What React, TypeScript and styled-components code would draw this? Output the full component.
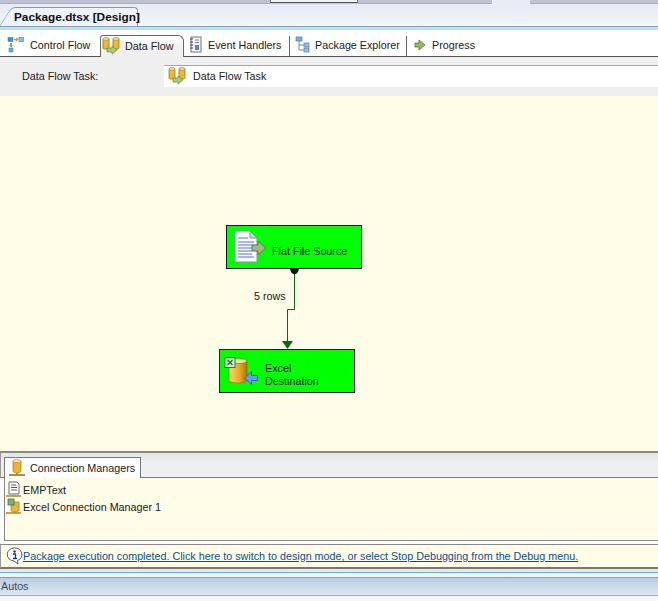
import React from "react";
import styled, { createGlobalStyle } from "styled-components";

const Global = createGlobalStyle`
  html, body { margin: 0; padding: 0; background: #fff; overflow: hidden; }
  body { font-family: "Liberation Sans", "Noto Sans", sans-serif; font-size: 10.75px; color: #1a1a1a; }
`;
const Page = styled.div`
  width: 658px; height: 601px; display: flex; flex-direction: column; overflow: hidden;
`;
const TopStrip = styled.div`
  height: 4px; flex: none; display: flex; background: #bfc5d1;
`;
const TopPiece = styled.div<{ $w: number; $kind: "gray" | "box" | "light" }>`
  width: ${(p) => p.$w}px; box-sizing: border-box;
  ${(p) => p.$kind === "gray" && "background: #bcc2cf; border-bottom: 1px solid #a9afbc;"}
  ${(p) => p.$kind === "box" && "background: #eef1f6; height: 3px; border-bottom: 1px solid #555; border-left: 1px solid #777; border-right: 1px solid #777;"}
  ${(p) => p.$kind === "light" && "background: #e8ecf5;"}
`;
const DocStrip = styled.div`
  height: 22px; flex: none; display: flex; align-items: flex-end; padding-left: 14px;
  background: linear-gradient(#e6eaf4, #f2f5fa); overflow: hidden;
`;
const DocTab = styled.div`
  position: relative; width: 124px; height: 19px; box-sizing: border-box; background: #eef2f9;
  border: 1px solid #7f9db9; border-left: none; border-bottom: none; border-radius: 0 4px 0 0;
  font-size: 11.8px; font-weight: 700; color: #111; padding: 2px 0 0 0; white-space: nowrap;
  &::before {
    content: ""; position: absolute; left: -9px; top: -1px; width: 14px; height: 19px; background: #eef2f9;
    border-top: 1px solid #7f9db9; border-left: 1px solid #7f9db9; border-radius: 5px 0 0 0;
    transform: skewX(-32deg); z-index: 0;
  }
`;
const DocTabText = styled.span`
  position: relative;
`;
const BlueRule = styled.div`
  height: 4px; flex: none; background: #c2ddf0; border-top: 1px solid #7fa4b8; box-sizing: border-box;
`;
const TabRow = styled.div`
  height: 26px; flex: none; display: flex; align-items: flex-end; background: #fff;
  border-bottom: 1px solid #555;
`;
const DesignerTab = styled.div<{ $w?: number; $pad: number; $gap: number; $sep?: boolean }>`
  width: ${(p) => (p.$w ? `${p.$w}px` : "auto")}; height: 20px; box-sizing: border-box;
  display: flex; align-items: center; gap: ${(p) => p.$gap}px; padding: 0 0 2px ${(p) => p.$pad}px;
  border-right: ${(p) => (p.$sep ? "1px solid #666" : "none")};
  white-space: nowrap;
`;
const ActiveTab = styled.div`
  width: 84px; height: 22px; box-sizing: border-box; margin-bottom: -1px; position: relative;
  display: flex; align-items: center; gap: 5px; padding: 0 0 2px 1px;
  background: linear-gradient(#fff, #f0f0f0 60%);
  border: 1px solid #666; border-bottom: none; border-radius: 3px 6px 0 0;
  white-space: nowrap;
`;
const TaskBar = styled.div`
  flex: none; height: 39px; background: #efefef; display: flex; align-items: center; padding: 0 0 2px 22px; box-sizing: border-box;
`;
const TaskLabel = styled.div`
  width: 142px;
`;
const TaskField = styled.div`
  flex: 1; height: 21px; background: #fff; border-top: 1px solid #a8a8a8; display: flex; align-items: center; gap: 7px; padding-left: 4px;
`;
const Canvas = styled.div`
  flex: none; height: 355px; background: #fffce8; position: relative;
`;
const Node = styled.div<{ $x: number; $y: number; $gap: number; $pad: number }>`
  position: absolute; left: ${(p) => p.$x}px; top: ${(p) => p.$y}px; width: 136px; height: 44px; box-sizing: border-box;
  background: #00ff00; border: 1px solid #111; display: flex; align-items: center;
  padding-left: ${(p) => p.$pad}px; gap: ${(p) => p.$gap}px; line-height: 13px;
`;
const NodeLabel = styled.span`
  margin-top: 8px;
`;
const RowsLabel = styled.div`
  position: absolute; left: 254px; top: 194px;
`;
const Wire = styled.svg`
  position: absolute; left: 275px; top: 173px;
`;
const TrayDivider = styled.div`
  flex: none; height: 2px; background: #8a8a84;
`;
const TrayTabs = styled.div`
  flex: none; height: 24px; background: linear-gradient(#e4e6ec, #eeeff0 40%); display: flex; align-items: flex-end; padding-left: 3px;
  border-bottom: 1px solid #777; border-left: 1px solid #999;
`;
const TrayTab = styled.div`
  width: 137px; height: 21px; margin-bottom: -1px; box-sizing: border-box; background: #fff; border: 1px solid #777; border-bottom: none;
  display: flex; align-items: center; gap: 4px; padding-left: 3px; white-space: nowrap;
`;
const TrayList = styled.div`
  flex: none; height: 63px; box-sizing: border-box; background: #fffce8; margin-left: 4px; border-left: 1px solid #888; padding: 3px 0 0 0;
  border-bottom: 1px solid #888;
`;
const TrayItem = styled.div`
  height: 17px; display: flex; align-items: center; white-space: nowrap;
`;
const InfoBar = styled.div`
  flex: none; height: 25px; box-sizing: border-box; margin-top: 3px; background: #fffce8; border-top: 1px solid #888; border-bottom: 2px solid #777;
  border-left: 1px solid #999; display: flex; align-items: center; padding-left: 5px; gap: 0;
`;
const InfoLink = styled.a`
  color: #0a4f9a; text-decoration: underline; white-space: nowrap;
`;
const BottomEdge = styled.div`
  flex: none; height: 8px; background: linear-gradient(#e2eaf2 0 3px, #6fa8cf 3px 4px, #eef4fa 4px);
`;
const AutosHeader = styled.div`
  flex: none; height: 19px; box-sizing: border-box; background: linear-gradient(#b9cde2, #dde7f1); border-top: 1px solid #999; border-bottom: 1px solid #aaa;
  color: #3c4a55; padding-left: 1px; line-height: 16px;
`;
const Rest = styled.div`flex: 1; background: #f7f7f3;`;

const ControlFlowIcon = () => (
  <svg width="18" height="18" viewBox="0 0 18 18">
    <rect x="2" y="1.500" width="5" height="4" fill="#3f8fd8" stroke="#3a6ea8" strokeWidth=".5"/>
    <rect x="13" y="1.500" width="5" height="4" fill="#7cc0ee" stroke="#3a6ea8" strokeWidth=".5"/>
    <rect x="3" y="12" width="4" height="4" fill="#6aaee8" stroke="#3a6ea8" strokeWidth=".5"/>
    <path d="M8 2.800h2V1.500l3 2-3 2V4.200H8z" fill="#f08a30"/>
    <path d="M4 7h2v2h1.200L5 11.500 2.800 9H4z" fill="#7ab45a"/>
  </svg>
);
const Cyl = ({ x, y, w = 6, h = 11 }: { x: number; y: number; w?: number; h?: number }) => (
  <g>
    <rect x={x} y={y} width={w} height={h} rx="1.5" fill="#efb92e" stroke="#8a6a10" strokeWidth=".7"/>
    <ellipse cx={x + w / 2} cy={y + 1} rx={w / 2} ry="1.2" fill="#fff2a8" stroke="#8a6a10" strokeWidth=".5"/>
  </g>
);
const DataFlowIcon = () => (
  <svg width="18" height="18" viewBox="0 0 18 18">
    <Cyl x={1} y={1} />
    <Cyl x={11} y={1} />
    <path d="M5 11h5V9l5 4-5 4v-2H5z" fill="#a8cc74" stroke="#5a7a3a" strokeWidth=".6"/>
  </svg>
);
const EventIcon = () => (
  <svg width="16" height="18" viewBox="0 0 16 18">
    <rect x="3" y="1" width="10" height="15" fill="#f2f3f6" stroke="#777"/>
    <path d="M2 3h3M2 6h3M2 9h3M2 12h3" stroke="#444"/>
    <path d="M7 4h4M7 6.500h4" stroke="#889" />
    <rect x="7" y="9" width="4" height="5" fill="#5a86b8"/>
  </svg>
);
const ExplorerIcon = () => (
  <svg width="16" height="18" viewBox="0 0 16 18">
    <path d="M4 5v9h6M4 9h6" stroke="#888" fill="none"/>
    <rect x="1" y="1" width="6" height="4" fill="#7cb0e4" stroke="#3a6ea8" strokeWidth=".6"/>
    <rect x="9" y="7" width="5" height="4" fill="#94c0ea" stroke="#3a6ea8" strokeWidth=".6"/>
    <rect x="9" y="12" width="5" height="4" fill="#94c0ea" stroke="#3a6ea8" strokeWidth=".6"/>
  </svg>
);
const ProgressIcon = () => (
  <svg width="12" height="12" viewBox="0 0 12 12">
    <path d="M1 4h4V1l6 5-6 5V8H1z" fill="#8cc060" stroke="#4d7a32" strokeWidth=".8"/>
  </svg>
);
const FlatFileIcon = () => (
  <svg width="34" height="34" viewBox="0 0 34 34">
    <path d="M2 1h15l7 7v24H2z" fill="#f6f8fc" stroke="#8a93ad"/>
    <path d="M17 1v7h7z" fill="#c8d2e6" stroke="#8a93ad"/>
    <path d="M5 8h10M5 12h16M5 15h16M5 18h16M5 21h14M5 24h14M5 27h16" stroke="#6076b0" strokeWidth="1.2"/>
    <path d="M19 15h6v-4l8 7-8 7v-4h-6z" fill="#9dbb7e" stroke="#5e7a58"/>
  </svg>
);
const ExcelDestIcon = () => (
  <svg width="34" height="29" viewBox="0 0 34 29">
    <defs>
      <linearGradient id="gold" x1="0" x2="1" y1="0" y2="0">
        <stop offset="0" stopColor="#f7d873"/><stop offset=".6" stopColor="#e4a91e"/><stop offset="1" stopColor="#a87408"/>
      </linearGradient>
    </defs>
    <path d="M5 4h18v19c0 2-4 3-9 3s-9-1-9-3z" fill="url(#gold)" stroke="#8a6a10" strokeWidth=".6"/>
    <ellipse cx="14" cy="4" rx="9" ry="2.500" fill="#f6e6a0" stroke="#8a6a10" strokeWidth=".6"/>
    <rect x="1" y="0.500" width="10" height="10" fill="#d6ead6" stroke="#2e7a3a"/>
    <path d="M3.500 3l5 5M8.500 3l-5 5" stroke="#1e6a2a" strokeWidth="1.300"/>
    <path d="M33.500 18.500v5h-6v4l-7-6.500 7-6.500v4z" fill="#5f9ee8" stroke="#2f66b8"/>
  </svg>
);
const ConnIcon = () => (
  <svg width="18" height="20" viewBox="0 0 18 20">
    <path d="M1 17h16" stroke="#8a6a10" strokeWidth="1.500"/>
    <path d="M9 14v3" stroke="#8a6a10"/>
    <path d="M5 3h8v10c0 1-2 2-4 2s-4-1-4-2z" fill="#eeb52c" stroke="#8a6a10" strokeWidth=".6"/>
    <ellipse cx="9" cy="3" rx="4" ry="1.500" fill="#fff0a0" stroke="#8a6a10" strokeWidth=".5"/>
  </svg>
);
const TextConnIcon = () => (
  <svg width="18" height="17" viewBox="0 0 18 17">
    <path d="M1 15h15" stroke="#a8842a" strokeWidth="1.500"/>
    <path d="M4 1h8l2 2v10H4z" fill="#fff" stroke="#667"/>
    <path d="M6 4h5M6 6.500h6M6 9h6" stroke="#556" />
  </svg>
);
const ExcelConnIcon = () => (
  <svg width="18" height="17" viewBox="0 0 18 17">
    <path d="M1 15h15" stroke="#a8842a" strokeWidth="1.500"/>
    <path d="M6 4h8v8c0 1-2 2-4 2s-4-1-4-2z" fill="#eeb52c" stroke="#8a6a10" strokeWidth=".6"/>
    <rect x="3" y="1" width="6" height="6" fill="#7ab08a" stroke="#2e6a3a" strokeWidth=".7"/>
  </svg>
);
const InfoIcon = () => (
  <svg width="17" height="18" viewBox="0 0 17 18">
    <path d="M8.500 1a7 6.500 0 0 1 3 12.500L12 17l-4-3a7 6.500 0 0 1 .5-13z" fill="#fff" stroke="#555"/>
    <circle cx="8.500" cy="4.500" r="1.200" fill="#1c2f9a"/>
    <path d="M7 7h2.500v4.500H11M7 11.500h3" stroke="#1c2f9a" strokeWidth="1.300" fill="none"/>
  </svg>
);

export default function App() {
  return (
    <Page>
      <Global />
      <TopStrip>
        <TopPiece $w={270} $kind="gray" />
        <TopPiece $w={88} $kind="box" />
        <TopPiece $w={134} $kind="gray" />
        <TopPiece $w={38} $kind="light" />
        <TopPiece $w={128} $kind="gray" />
      </TopStrip>
      <DocStrip><DocTab><DocTabText>Package.dtsx [Design]</DocTabText></DocTab></DocStrip>
      <BlueRule />
      <TabRow>
        <DesignerTab $w={100} $pad={6} $gap={6}><ControlFlowIcon />Control Flow</DesignerTab>
        <ActiveTab><DataFlowIcon />Data Flow</ActiveTab>
        <DesignerTab $w={106} $pad={4} $gap={4} $sep><EventIcon />Event Handlers</DesignerTab>
        <DesignerTab $w={117} $pad={5} $gap={4} $sep><ExplorerIcon />Package Explorer</DesignerTab>
        <DesignerTab $pad={7} $gap={6}><ProgressIcon />Progress</DesignerTab>
      </TabRow>
      <TaskBar>
        <TaskLabel>Data Flow Task:</TaskLabel>
        <TaskField><DataFlowIcon />Data Flow Task</TaskField>
      </TaskBar>
      <Canvas>
        <Node $x={226} $y={129} $pad={6} $gap={5}><FlatFileIcon /><NodeLabel>Flat File Source</NodeLabel></Node>
        <RowsLabel>5 rows</RowsLabel>
        <Wire width="24" height="80" viewBox="0 0 24 80">
          <path d="M19.500 4v36.500h-7V72" stroke="#0a6a0a" fill="none"/>
          <path d="M15 0h9l-1 3-2 2h-3l-2-2z" fill="#111"/>
          <path d="M7 72h11l-5.500 8z" fill="#0a6a0a"/>
        </Wire>
        <Node $x={219} $y={253} $pad={4} $gap={7}><ExcelDestIcon /><NodeLabel>Excel<br />Destination</NodeLabel></Node>
      </Canvas>
      <TrayDivider />
      <TrayTabs><TrayTab><ConnIcon />Connection Managers</TrayTab></TrayTabs>
      <TrayList>
        <TrayItem><TextConnIcon />EMPText</TrayItem>
        <TrayItem><ExcelConnIcon />Excel Connection Manager 1</TrayItem>
      </TrayList>
      <InfoBar><InfoIcon /><InfoLink>Package execution completed. Click here to switch to design mode, or select Stop Debugging from the Debug menu.</InfoLink></InfoBar>
      <BottomEdge />
      <AutosHeader>Autos</AutosHeader>
      <Rest />
    </Page>
  );
}
